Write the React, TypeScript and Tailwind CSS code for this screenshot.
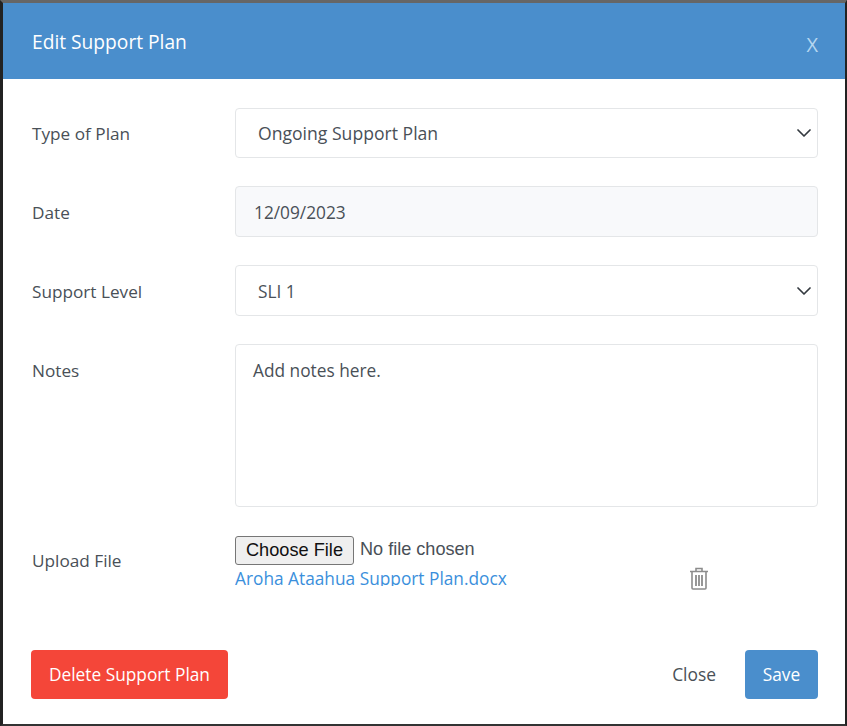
import React from 'react'

const fieldFont = "font-['Open_Sans',sans-serif]"

function Chevron() {
  return (
    <svg className="pointer-events-none absolute right-[7px] top-1/2 -translate-y-1/2" width="14" height="9" viewBox="0 0 14 9" fill="none">
      <path d="M1 1.5l6 6 6-6" stroke="#343a40" strokeWidth="1.7" strokeLinecap="round" strokeLinejoin="round" />
    </svg>
  )
}

function Row({ label, className, labelClass, children }: { label: string; className?: string; labelClass?: string; children: React.ReactNode }) {
  return (
    <div className={`flex ${className ?? ''}`}>
      <label className={`w-[204px] shrink-0 pl-[1px] text-[17.2px] text-[#495057] ${labelClass ?? ''}`}>{label}</label>
      <div className="flex-1">{children}</div>
    </div>
  )
}

export default function App() {
  return (
    <div className={`flex h-[726px] w-[847px] flex-col overflow-hidden border-b-[2px] border-l-[3px] border-r-[2px] border-t-[3px] border-b-[#333] border-l-[#222] border-r-[#222] border-t-[#666] bg-white ${fieldFont}`}>
      <div className="flex h-[76px] shrink-0 items-start justify-between bg-[#4a8ecc] pl-[29px] pr-[27px]">
        <h1 className="mt-[25px] text-[19.2px] leading-[28px] text-white">Edit Support Plan</h1>
        <button type="button" className="mt-[30px] text-[20px] leading-[24px] text-[#b5d6f0]">X</button>
      </div>

      <div className="flex flex-1 flex-col pl-[28px] pr-[27px] pt-[29px]">
        <Row label="Type of Plan" labelClass="pt-[13px] leading-[26px]">
          <div className="relative">
            <select defaultValue="ongoing" className="h-[50px] w-full appearance-none rounded-[4px] border border-[#e4e6e8] bg-white pl-[22px] text-[17.6px] text-[#495057] outline-none">
              <option value="ongoing">Ongoing Support Plan</option>
            </select>
            <Chevron />
          </div>
        </Row>

        <Row label="Date" className="mt-[28px]" labelClass="pt-[14px] leading-[26px]">
          <input readOnly value="12/09/2023" className="h-[51px] w-full rounded-[4px] border border-[#e4e6e8] bg-[#f8f9fb] pl-[18px] pt-[2px] text-[17.3px] text-[#495057] outline-none" />
        </Row>

        <Row label="Support Level" className="mt-[28px]" labelClass="pt-[14px] leading-[26px]">
          <div className="relative">
            <select defaultValue="1" className="h-[51px] w-full appearance-none rounded-[4px] border border-[#e4e6e8] bg-white pl-[22px] pt-[2px] text-[17.3px] text-[#495057] outline-none">
              <option value="1">SLI 1</option>
            </select>
            <Chevron />
          </div>
        </Row>

        <Row label="Notes" className="mt-[28px]" labelClass="pt-[14px] leading-[26px]">
          <textarea readOnly value="Add notes here." className="block h-[163px] w-full resize-none rounded-[4px] border border-[#e4e6e8] bg-white px-[17px] pt-[13px] text-[17.3px] leading-[26px] text-[#495057] outline-none" />
        </Row>

        <Row label="Upload File" className="mt-[28px]" labelClass="pt-[13px] leading-[26px]">
          <div className="font-['Liberation_Sans',sans-serif] text-[#495057]">
            <div className="flex h-[30px] items-center">
              <button type="button" className="h-[29px] w-[119px] rounded-[3px] border border-[#767676] bg-[#efefef] text-[18.2px] text-[#111]">Choose File</button>
              <span className="ml-[6px] text-[18.1px]">No file chosen</span>
            </div>
            <div className="h-[21px] overflow-hidden">
              <a href="#" className={`block pt-[1px] text-[17.3px] leading-[26px] text-[#3b8fdc] ${fieldFont}`}>Aroha Ataahua Support Plan.docx</a>
            </div>
          </div>
          <div className="relative">
            <svg className="absolute left-[454px] top-[-19px]" width="20" height="23" viewBox="0 0 20 23" fill="none" stroke="#8c8c8c" strokeWidth="1.6">
              <path d="M1 4.5h18M7 4.5V1.5h6v3" />
              <path d="M3 4.5v16.5a1 1 0 001 1h12a1 1 0 001-1V4.5" />
              <path d="M7 8v11M10 8v11M13 8v11" strokeWidth="1.8" />
            </svg>
          </div>
        </Row>

        <div className="mt-[64px] flex items-center justify-between">
          <button type="button" className="h-[49px] w-[197px] rounded-[4px] bg-[#f44639] text-[17.3px] text-white">Delete Support Plan</button>
          <div className="flex items-center">
            <button type="button" className="text-[17.4px] text-[#495057]">Close</button>
            <button type="button" className="ml-[29px] h-[49px] w-[73px] rounded-[4px] bg-[#4a8ecc] text-[17.3px] text-white">Save</button>
          </div>
        </div>
      </div>
    </div>
  )
}
